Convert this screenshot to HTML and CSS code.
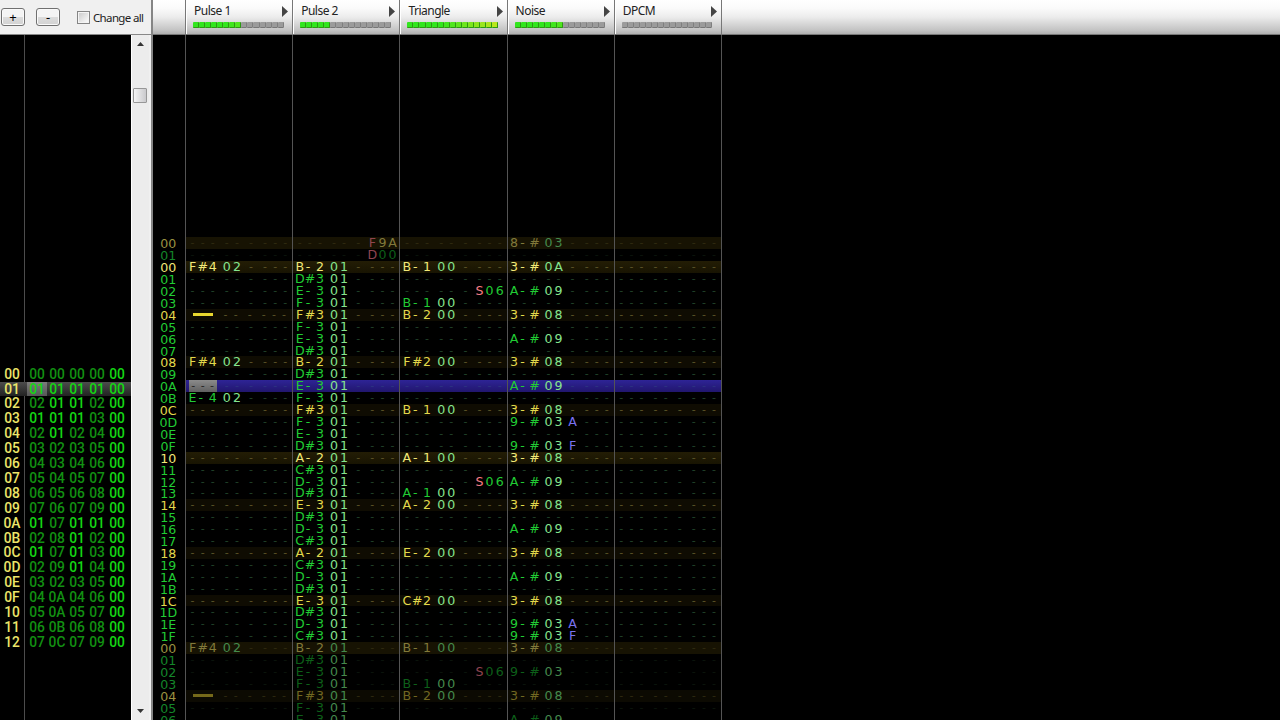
FILE: index.html
```html
<!doctype html>
<html lang="en">
<head>
    <meta charset="utf-8" />
    <title>Pattern editor</title>
    <link rel="stylesheet" href="styles.css">
</head>
<body>
    <div class="app">
        <div class="frames">
            <div class="toolbar">
                <button class="btn">+</button>
                <button class="btn minus">-</button>
                <label class="change"><span class="box"></span>Change all</label>
            </div>
            <div class="frame-body">
                <div class="frame-list" id="frames"></div>
                <div class="scroll">
                    <svg width="7" height="4" viewBox="0 0 7 4"><path d="M0 4L3.5 0L7 4z" fill="#333"/></svg>
                    <span class="thumb"></span>
                    <svg class="down" width="7" height="4" viewBox="0 0 7 4"><path d="M0 0L3.5 4L7 0z" fill="#333"/></svg>
                </div>
            </div>
        </div>
        <div class="pattern">
            <div class="head" id="head"><div class="head-num"></div></div>
            <div class="body" id="body">
                <div class="col num" id="num"></div>
            </div>
        </div>
    </div>
    <script src="script.js"></script>
</body>
</html>
```
FILE: styles.css
```css
*{ padding:0; margin:0; box-sizing:border-box;}
body
{
    background:#000;
    overflow:hidden;
    font-family:"DejaVu Sans", Verdana, sans-serif;
}
.app
{
    display:flex;
    width:1280px;
    height:720px;
}
/* frame list on the left */
.frames
{
    display:flex;
    flex-direction:column;
    width:153px;
    background:#f0f0f0;
    border-right:2px solid #858585;
}
.toolbar
{
    display:flex;
    align-items:center;
    height:35px;
    padding-left:1px;
    border-bottom:1px solid #888;
    color:#222;
}
.btn
{
    width:24px;
    height:18px;
    border:1px solid #707070;
    border-radius:3px;
    background:linear-gradient(#f4f4f4 50%, #dcdcdc 50%, #d2d2d2);
    box-shadow:inset 0 0 0 1px #fafafa;
    font:13px/14px "Noto Sans", sans-serif;
    color:#000;
}
.minus
{
    margin-left:11px;
}
.change
{
    display:flex;
    align-items:center;
    gap:3px;
    margin-left:17px;
    white-space:nowrap;
    font:11.5px "Noto Sans", sans-serif;
    letter-spacing:-0.65px;
}
.box
{
    width:13px;
    height:13px;
    border:1px solid #858585;
    background:linear-gradient(135deg, #c8c8c8, #fff);
    box-shadow:inset 0 0 0 1px #f4f4f4;
}
.frame-body
{
    display:flex;
    flex:1;
}
.frame-list
{
    width:132px;
    padding-top:331.6px;
    background:linear-gradient(90deg, #000 24px, #4c4c4c 24px, #4c4c4c 25px, #000 25px);
    border-right:1px solid #fff;
    font:500 13.8px/15.4px Roboto, sans-serif;
}
.frame
{
    display:flex;
    height:14.92px;
    color:#129012;
    text-align:center;
}
.frame span
{
    width:20px;
}
.frame .idx
{
    width:24px;
    margin-right:3px;
    color:#ece56a;
}
.frame .on
{
    color:#14d714;
}
.frame.active
{
    background:linear-gradient(#4c4c4c, #222);
}
.frame.active .sel
{
    background:linear-gradient(#7c7c7c, #565656);
}
.scroll
{
    display:flex;
    flex-direction:column;
    align-items:center;
    width:17px;
    padding:7px 1px 7px 0;
    background:#ececec;
}
.thumb
{
    width:14px;
    height:15px;
    margin-top:42px;
    border:1px solid #979797;
    border-radius:1px;
    background:linear-gradient(90deg, #f5f5f5, #c9c9cc);
}
.down
{
    margin-top:auto;
}
/* channels */
.pattern
{
    display:flex;
    flex-direction:column;
    flex:1;
}
.head
{
    display:flex;
    height:35px;
    background:linear-gradient(#fff 0, #fafafa 25%, #ececec 50%, #c2c2c2 90%, #b0b0b0);
    border-bottom:1px solid #777;
}
.head-num
{
    width:33px;
    border-right:1px solid #777;
}
.chan
{
    width:107.2px;
    padding:2px 4px 0 7px;
    border-left:1px solid #fff;
    border-right:1px solid #777;
}
.name
{
    display:flex;
    align-items:center;
    justify-content:space-between;
    height:18px;
    font:12px/18px "Noto Sans", sans-serif;
    letter-spacing:-0.5px;
    color:#222;
}
.meter
{
    display:flex;
    margin-top:2px;
    margin-left:-1px;
}
.meter i
{
    width:6.05px;
    height:6px;
    background:#9b9b9b;
    border-right:1px solid #7f7f7f;
    border-bottom:1px solid #777;
    border-radius:1px;
}
.meter .lit
{
    border-color:#2c9a12;
}
.body
{
    display:flex;
    height:685px;
    overflow:hidden;
}
.col
{
    width:107.2px;
    padding-top:202.4px;
    border-right:1px solid #545454;
    font-size:12.6px;
    line-height:12.3px;
}
.num
{
    width:33px;
    text-align:center;
    color:#25b83c;
    line-height:13.4px;
}
.num .row
{
    justify-content:center;
    padding-right:3px;
    background:none;
}
.row
{
    display:flex;
    height:11.92px;
    padding-left:1.5px;
    color:#21cc34;
}
.beat
{
    color:#e2d94c;
    background:#0f0c02;
}
.bar
{
    color:#f1e878;
    background:linear-gradient(#231d05, #181402);
}
.cur
{
    background:linear-gradient(#2e2496, #21166d);
}
.past
{
    color:#0d5f19;
}
.past.beat
{
    color:#716721;
    background:#0c0a02;
}
.past.bar
{
    color:#81793a;
    background:#171303;
}
.num .past
{
    color:#14862a;
}
.num .past.beat, .num .past.bar
{
    color:#9a9241;
    background:none;
}
.group
{
    display:flex;
    margin-right:4px;
}
.group b
{
    width:10.1px;
    font-weight:normal;
    text-align:center;
}
/* a dash inside a note hugs the letter before it */
.group .dash
{
    text-align:left;
    padding-left:1px;
}
.none b
{
    font-size:11px;
}
.inst
{
    color:#86e58f;
}
.past .inst
{
    color:#458a4d;
}
.vol
{
    color:#7b72f0;
}
.fx b:first-child
{
    color:#f77e86;
}
.past .fx b:first-child
{
    color:#8f4550;
}
.row .none b, .row .none b:first-child
{
    color:#22442a;
}
.beat .none b, .bar .none b, .beat .none b:first-child, .bar .none b:first-child
{
    color:#5c5428;
}
.past .none b, .past .none b:first-child
{
    color:#0c160d;
}
.past.bar .none b, .past.beat .none b, .past.bar .none b:first-child, .past.beat .none b:first-child
{
    color:#302b11;
}
.cur .none b, .cur .none b:first-child
{
    color:#2c3480;
}
.cur .cursor
{
    margin-left:1px;
    margin-right:5px;
    width:28.3px;
    background:linear-gradient(#8b8b8b, #606060);
}
.cur .cursor b, .cur .cursor b:first-child
{
    width:9.43px;
    color:#242424;
}
.cut
{
    width:30.3px;
    padding:4.5px 4px 0 4px;
    margin-right:4px;
}
.cut i
{
    display:block;
    height:3px;
    width:20px;
    margin-left:1px;
    background:#e8d72f;
}
.past .cut i
{
    background:#75691a;
}
```
FILE: script.js
```js
var frames = [
    "00 00 00 00", "01 01 01 01", "02 01 01 02", "01 01 01 03", "02 01 02 04",
    "03 02 03 05", "04 03 04 06", "05 04 05 07", "06 05 06 08", "07 06 07 09",
    "01 07 01 01", "02 08 01 02", "01 07 01 03", "02 09 01 04", "03 02 03 05",
    "04 0A 04 06", "05 0A 05 07", "06 0B 06 08", "07 0C 07 09"
];
var active = 1;

// row number : note,instrument,volume,effect
var pulse2 = "B-2 D#3 E-3 F-3 F#3 F-3 E-3 D#3 B-2 D#3 E-3 F-3 F#3 F-3 E-3 D#3 " +
    "A-2 C#3 D-3 D#3 E-3 D#3 D-3 C#3 A-2 C#3 D-3 D#3 E-3 D#3 D-3 C#3";
var channels = [
    { name: "Pulse 1", level: 8, prev: {},
      rows: { 0: "F#4,02", 4: "cut", 8: "F#4,02", 11: "E-4,02" },
      next: { 0: "F#4,02", 4: "cut" } },
    { name: "Pulse 2", level: 5, prev: { 0: ",,,F9A", 1: ",,,D00" }, rows: {}, next: {} },
    { name: "Triangle", level: 15, prev: {},
      rows: { 0: "B-1,00", 2: ",,,S06", 3: "B-1,00", 4: "B-2,00", 8: "F#2,00", 12: "B-1,00",
              16: "A-1,00", 18: ",,,S06", 19: "A-1,00", 20: "A-2,00", 24: "E-2,00", 28: "C#2,00" },
      next: { 0: "B-1,00", 2: ",,,S06", 3: "B-1,00", 4: "B-2,00" } },
    { name: "Noise", level: 8, prev: { 0: "8-#,03" },
      rows: { 0: "3-#,0A", 2: "A-#,09", 4: "3-#,08", 6: "A-#,09", 8: "3-#,08", 10: "A-#,09",
              12: "3-#,08", 13: "9-#,03,A", 15: "9-#,03,F", 16: "3-#,08", 18: "A-#,09",
              20: "3-#,08", 22: "A-#,09", 24: "3-#,08", 26: "A-#,09", 28: "3-#,08",
              30: "9-#,03,A", 31: "9-#,03,F" },
      next: { 0: "3-#,08", 2: "9-#,03", 4: "3-#,08", 6: "A-#,09" } },
    { name: "DPCM", level: 0, prev: {}, rows: {}, next: {} }
];
pulse2.split(" ").forEach(function (note, i) {
    channels[1].rows[i] = note + ",01";
    if (i < 7) {
        channels[1].next[i] = note + ",01";
    }
});

function hex(n) {
    return (n < 16 ? "0" : "") + n.toString(16).toUpperCase();
}

function rowClass(n, part) {
    var c = "row";
    if (n % 16 == 0) c += " bar";
    else if (n % 4 == 0) c += " beat";
    if (part != "rows") c += " past";
    return c;
}

function group(text, size, cls) {
    if (!text) {
        cls += " none";
        text = "---".substr(0, size);
        return '<span class="group ' + cls + '"><b>' + text.split("").join("</b><b>") + "</b></span>";
    }
    var out = '<span class="group ' + cls + '">';
    for (var i = 0; i < text.length; i++) {
        out += (text[i] == "-" ? '<b class="dash">' : "<b>") + text[i] + "</b>";
    }
    return out + "</span>";
}

function eachRow(fn) {
    var i;
    for (i = 0; i < 2; i++) fn(i, "prev");
    for (i = 0; i < 32; i++) fn(i, "rows");
    for (i = 0; i < 7; i++) fn(i, "next");
}

var html = "";
frames.forEach(function (line, i) {
    html += '<div class="frame' + (i == active ? " active" : "") + '"><span class="idx">' + hex(i) + "</span>";
    var now = (frames[active] + " 00").split(" ");
    (line + " 00").split(" ").forEach(function (v, k) {
        html += '<span class="' + (v == now[k] ? "on" : "") + (k == 0 ? " sel" : "") + '">' + v + "</span>";
    });
    html += "</div>";
});
document.getElementById("frames").innerHTML = html;

html = "";
eachRow(function (n, part) {
    html += '<div class="' + rowClass(n, part) + '">' + hex(n) + "</div>";
});
document.getElementById("num").innerHTML = html;

channels.forEach(function (ch, c) {
    var head = '<div class="chan"><div class="name">' + ch.name +
        '<svg width="6" height="11" viewBox="0 0 6 11"><path d="M0 0L6 5.5L0 11z" fill="#444"/></svg></div><div class="meter">';
    for (var i = 0; i < 15; i++) {
        // green turns to yellow towards the right end
        var red = 50 + Math.max(0, i - 5) * 15;
        head += i < ch.level ? '<i class="lit" style="background:rgb(' + red + ',230,30)"></i>' : "<i></i>";
    }
    document.getElementById("head").insertAdjacentHTML("beforeend", head + "</div></div>");

    var col = '<div class="col">';
    eachRow(function (n, part) {
        var cur = part == "rows" && n == 10;
        var f = (ch[part][n] || "").split(",");
        col += '<div class="' + rowClass(n, part) + (cur ? " cur" : "") + '">';
        col += f[0] == "cut" ? '<span class="cut"><i></i></span>' : group(f[0], 3, "note" + (cur && c == 0 ? " cursor" : ""));
        col += group(f[1], 2, "inst") + group(f[2], 1, "vol") + group(f[3], 3, "fx") + "</div>";
    });
    document.getElementById("body").insertAdjacentHTML("beforeend", col + "</div>");
});
```
